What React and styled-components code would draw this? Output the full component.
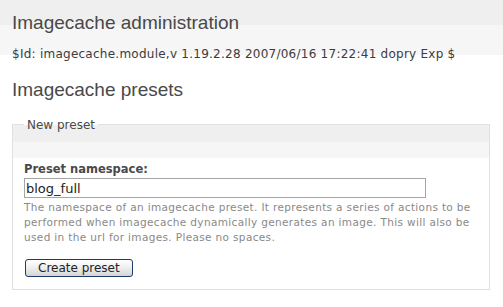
import React from "react";
import styled, { createGlobalStyle } from "styled-components";

const GlobalStyle = createGlobalStyle`
  html, body {
    margin: 0;
    padding: 0;
    background: #ffffff;
  }
  body {
    font-family: "DejaVu Sans", Verdana, sans-serif;
    color: #494949;
  }
`;

const Page = styled.div`
  min-height: 307px;
  padding: 12px 13px 0 12px;
  box-sizing: border-box;
  background: linear-gradient(
    to bottom,
    #efefef 0,
    #efefef 25px,
    #f6f6f6 25px,
    #f6f6f6 55px,
    #ffffff 55px
  );
`;

const Title = styled.h1`
  margin: 0;
  font-family: "Liberation Sans", Arial, sans-serif;
  font-weight: normal;
  font-size: 19px;
  line-height: 22px;
  color: #494949;
`;

const Subtitle = styled(Title).attrs({ as: "h2" })`
  margin-top: 18px;
`;

const Revision = styled.p`
  margin: 13px 0 0;
  font-size: 12px;
  letter-spacing: 0.25px;
  line-height: 14px;
  color: #3c3c3c;
`;

const Fieldset = styled.fieldset`
  margin: 15px 0 0;
  padding: 0 11px 12px;
  border: 1px solid #e0e0e0;
  background: linear-gradient(
    to bottom,
    #efefef 0,
    #efefef 17px,
    #f6f6f6 17px,
    #f6f6f6 33px,
    #ffffff 33px
  );
`;

const Legend = styled.legend`
  padding: 2px 3px 0;
  font-size: 12px;
  line-height: 14px;
  color: #494949;
`;

const Label = styled.label`
  display: block;
  margin: 30px 0 2px;
  font-size: 11.5px;
  line-height: 14px;
  font-weight: bold;
  color: #494949;
`;

const TextInput = styled.input`
  display: block;
  box-sizing: border-box;
  width: 402px;
  height: 20px;
  margin: 0;
  padding: 0 1px;
  border: 1px solid #a5a5a5;
  font-family: "DejaVu Sans", Verdana, sans-serif;
  font-size: 13px;
  color: #222222;
  background: #ffffff;
  outline: none;
`;

const Description = styled.div`
  margin: 2px 0 14px;
  font-size: 10.5px;
  letter-spacing: 0.35px;
  line-height: 15px;
  color: #898989;
`;

const Button = styled.button`
  display: block;
  box-sizing: border-box;
  height: 18px;
  margin: 0 0 0 1px;
  padding: 0 12px;
  border: 1px solid #1c3a6a;
  border-radius: 3px;
  background: linear-gradient(to bottom, #ffffff 0%, #f0f0f0 45%, #d4d4d4 100%);
  font-family: "DejaVu Sans", Verdana, sans-serif;
  font-size: 12px;
  line-height: 14px;
  color: #222222;
`;

export default function App() {
  return (
    <>
      <GlobalStyle />
      <Page>
        <Title>Imagecache administration</Title>
        <Revision>
          $Id: imagecache.module,v 1.19.2.28 2007/06/16 17:22:41 dopry Exp $
        </Revision>
        <Subtitle>Imagecache presets</Subtitle>
        <Fieldset>
          <Legend>New preset</Legend>
          <Label htmlFor="preset-namespace">Preset namespace:</Label>
          <TextInput id="preset-namespace" defaultValue="blog_full" />
          <Description>
            The namespace of an imagecache preset. It represents a series of
            actions to be performed when imagecache dynamically generates an
            image. This will also be used in the url for images. Please no
            spaces.
          </Description>
          <Button type="button">Create preset</Button>
        </Fieldset>
      </Page>
    </>
  );
}
